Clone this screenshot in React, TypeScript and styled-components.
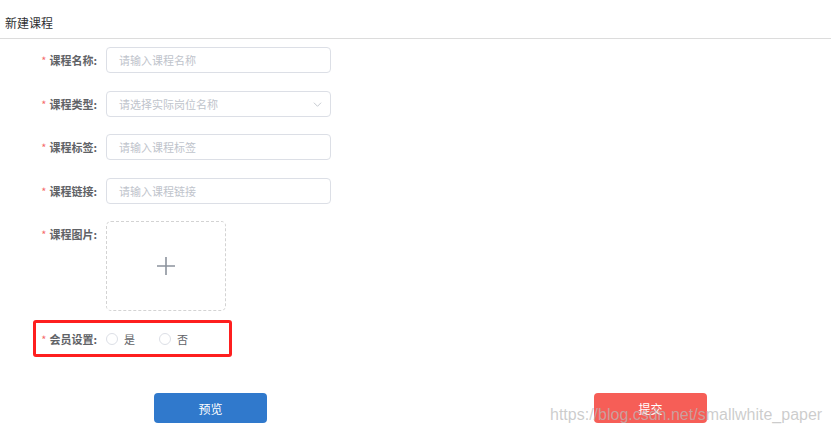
import * as React from 'react'
import styled, { createGlobalStyle } from 'styled-components'

const GlobalStyle = createGlobalStyle`
    html, body {
        margin: 0;
        padding: 0;
        background: #fff;
    }
    body {
        font-family: "Noto Sans CJK SC", "Liberation Sans", sans-serif;
    }
`

const Page = styled.div`
    position: relative;
    width: 831px;
    height: 437px;
    overflow: hidden;
    background: #fff;
`

const Header = styled.div`
    height: 39px;
    box-sizing: border-box;
    padding: 6px 0 0 5px;
    border-bottom: 1px solid #dcdcdc;
    display: flex;
    align-items: center;
    font-size: 12px;
    color: #303133;
`

const Form = styled.div`
    padding-top: 8px;
    display: flex;
    flex-direction: column;
`

const FormItem = styled.div<{ $gap?: number }>`
    display: flex;
    align-items: flex-start;
    margin-bottom: ${p => p.$gap ?? 17.5}px;
`

const Highlight = styled.div`
    display: flex;
    align-items: center;
    margin-left: 33px;
    width: 193px;
    height: 31px;
    border: 3px solid #fe1f1f;
    border-radius: 3px;
`

const Label = styled.label<{ $width?: number }>`
    width: ${p => p.$width ?? 106}px;
    box-sizing: border-box;
    padding-right: 9px;
    text-align: right;
    font-size: 11px;
    font-weight: bold;
    line-height: 26px;
    color: #606266;
    flex-shrink: 0;
    &::before {
        content: '*';
        color: #f56c6c;
        margin-right: 3px;
        font-weight: normal;
    }
`

const InputBox = styled.div`
    position: relative;
    width: 225px;
    height: 26px;
    box-sizing: border-box;
    border: 1px solid #dcdfe6;
    border-radius: 4px;
    padding-left: 12px;
    display: flex;
    align-items: center;
    font-size: 11px;
    color: #c0c4cc;
`

const Arrow = styled.svg`
    position: absolute;
    right: 8px;
    top: 8px;
`

const Upload = styled.div`
    width: 120px;
    height: 90px;
    box-sizing: border-box;
    border: 1px dashed #d3d3d3;
    border-radius: 5px;
    display: flex;
    align-items: center;
    justify-content: center;
`

const RadioGroup = styled.div`
    display: flex;
    align-items: center;
    gap: 24px;
`

const Radio = styled.span`
    display: inline-flex;
    align-items: center;
    gap: 6px;
    font-size: 11px;
    color: #606266;
    &::before {
        content: '';
        width: 12px;
        height: 12px;
        box-sizing: border-box;
        border: 1px solid #dcdfe6;
        border-radius: 50%;
        background: #fff;
    }
`

const ButtonBar = styled.div`
    display: flex;
    justify-content: space-between;
    padding: 36px 124px 0 154px;
`

const Button = styled.button<{ $color: string }>`
    width: 113px;
    height: 30px;
    border: none;
    border-radius: 4px;
    background: ${p => p.$color};
    color: #fff;
    font-size: 12px;
    font-family: "Noto Sans CJK SC", sans-serif;
    font-weight: normal;
`

const Watermark = styled.div`
    position: absolute;
    left: 550px;
    top: 405px;
    font-family: "Liberation Sans", Arial, sans-serif;
    font-size: 16px;
    line-height: 20px;
    color: rgba(185, 185, 185, 0.72);
    white-space: nowrap;
    pointer-events: none;
`

const fields = [
    { label: '课程名称:', placeholder: '请输入课程名称' },
    { label: '课程类型:', placeholder: '请选择实际岗位名称', select: true },
    { label: '课程标签:', placeholder: '请输入课程标签' },
    { label: '课程链接:', placeholder: '请输入课程链接' },
]

const App = () => {
    return (
        <Page>
            <GlobalStyle />
            <Header>新建课程</Header>
            <Form>
                {fields.map(f =>
                    <FormItem key={f.label}>
                        <Label>{f.label}</Label>
                        <InputBox>
                            {f.placeholder}
                            {f.select ?
                                <Arrow width="9" height="9" viewBox="0 0 10 10">
                                    <path d="M1 3 L5 7 L9 3" fill="none" stroke="#c0c4cc" strokeWidth="1" />
                                </Arrow> : null}
                        </InputBox>
                    </FormItem>
                )}
                <FormItem $gap={9}>
                    <Label>课程图片:</Label>
                    <Upload>
                        <svg width="20" height="20" viewBox="0 0 20 20">
                            <path d="M10 1 V19 M1 10 H19" stroke="#8c939d" strokeWidth="1.6" />
                        </svg>
                    </Upload>
                </FormItem>
                <Highlight>
                    <Label $width={70}>会员设置:</Label>
                    <RadioGroup>
                        <Radio>是</Radio>
                        <Radio>否</Radio>
                    </RadioGroup>
                </Highlight>
            </Form>
            <ButtonBar>
                <Button $color="#3079cc">预览</Button>
                <Button $color="#f65e57">提交</Button>
            </ButtonBar>
            <Watermark>https://blog.csdn.net/smallwhite_paper</Watermark>
        </Page>
    )
}

export default App
